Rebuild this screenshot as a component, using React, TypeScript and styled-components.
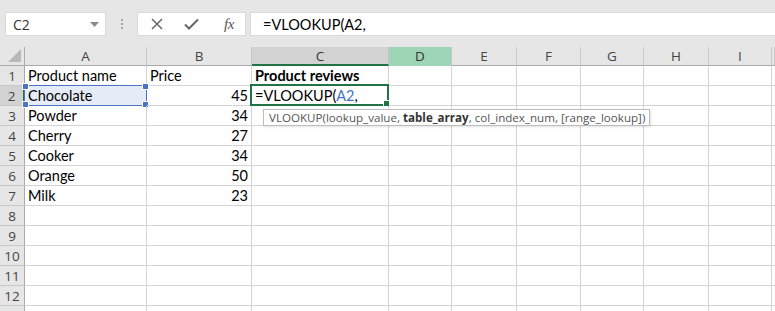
import React from "react";
import styled, { createGlobalStyle, css } from "styled-components";

const Global = createGlobalStyle`
  html, body { margin: 0; padding: 0; background: #e6e6e6; overflow: hidden; }
  #root { width: 775px; height: 311px; overflow: hidden; position: relative; }
`;

const UI = `"Open Sans", "Noto Sans", "DejaVu Sans", sans-serif`;
const CELL = `Lato, "Liberation Sans", sans-serif`;

const Page = styled.div`
  width: 775px;
  height: 311px;
  display: flex;
  flex-direction: column;
  background: #e6e6e6;
  position: relative;
  overflow: hidden;
`;

const Toolbar = styled.div`
  flex: 0 0 47px;
  box-sizing: border-box;
  padding: 12px 0 11px 5px;
  display: flex;
  align-items: stretch;
`;

const NameBox = styled.div`
  width: 101px;
  box-sizing: border-box;
  background: #fff;
  border: 1px solid #d9d9d9;
  display: flex;
  align-items: center;
  justify-content: space-between;
  padding: 0 6px 0 7px;
  font-family: ${UI};
  font-size: 14px;
  color: #333;
`;

const Grip = styled.div`
  width: 31px;
  display: flex;
  flex-direction: column;
  align-items: center;
  justify-content: center;
  gap: 2px;
  span {
    width: 2px;
    height: 2px;
    background: #a6a6a6;
  }
`;

const FxButtons = styled.div`
  width: 109px;
  box-sizing: border-box;
  background: #fff;
  border: 1px solid #d9d9d9;
  display: flex;
  align-items: center;
  padding-left: 12px;
`;

const IconSlot = styled.div<{ $w: number }>`
  width: ${(p) => p.$w}px;
  display: flex;
  align-items: center;
  justify-content: center;
`;

const Fx = styled.span`
  font-family: "Liberation Serif", serif;
  font-style: italic;
  font-size: 15px;
  color: #555;
  letter-spacing: -0.5px;
`;

const FormulaInput = styled.div`
  flex: 1;
  margin-left: 4px;
  box-sizing: border-box;
  background: #fff;
  border: 1px solid #d9d9d9;
  border-right: none;
  display: flex;
  align-items: center;
  padding-left: 12px;
  font-family: ${CELL};
  font-size: 14.5px;
  color: #000;
`;

const cols = [25, 122, 105, 137, 63, 65, 64, 63, 65, 63, 3];

const Grid = styled.div`
  flex: 0 0 auto;
  display: grid;
  grid-template-columns: ${cols.map((c) => c + "px").join(" ")};
  grid-template-rows: 19px repeat(13, 20px);
  background: #fff;
  position: relative;
`;

const ColHead = styled.div<{ $state?: "sel" | "hot" }>`
  box-sizing: border-box;
  background: #e6e6e6;
  border-right: 1px solid #c8c8c8;
  border-bottom: 1px solid #ababab;
  display: flex;
  align-items: center;
  justify-content: center;
  font-family: ${UI};
  font-size: 13.5px;
  color: #444;
  ${(p) =>
    p.$state === "sel" &&
    css`
      background: #d2d2d2;
      border-bottom: 2px solid #217346;
      color: #333;
    `}
  ${(p) =>
    p.$state === "hot" &&
    css`
      background: #9fd5b7;
      border-bottom: 1px solid #9fd5b7;
      color: #333;
    `}
`;

const Corner = styled.div`
  box-sizing: border-box;
  background: #e6e6e6;
  border-right: 1px solid #ababab;
  border-bottom: 1px solid #ababab;
  position: relative;
  &::after {
    content: "";
    position: absolute;
    right: 3px;
    bottom: 3px;
    width: 0;
    height: 0;
    border-left: 13px solid transparent;
    border-bottom: 13px solid #b8b8b8;
  }
`;

const RowHead = styled.div<{ $sel?: boolean }>`
  box-sizing: border-box;
  background: ${(p) => (p.$sel ? "#d2d2d2" : "#e6e6e6")};
  border-right: ${(p) => (p.$sel ? "2px solid #217346" : "1px solid #ababab")};
  border-bottom: 1px solid #c8c8c8;
  display: flex;
  align-items: center;
  justify-content: center;
  font-family: ${UI};
  font-size: 13.5px;
  color: #444;
`;

const Cell = styled.div<{ $num?: boolean; $bold?: boolean; $ref?: boolean }>`
  box-sizing: border-box;
  border-right: 1px solid #d4d4d4;
  border-bottom: 1px solid #d4d4d4;
  display: flex;
  align-items: center;
  justify-content: ${(p) => (p.$num ? "flex-end" : "flex-start")};
  padding: 0 3px 0 3px;
  font-family: ${CELL};
  font-size: 14.5px;
  font-weight: ${(p) => (p.$bold ? 700 : 400)};
  color: #000;
  white-space: nowrap;
  overflow: visible;
  position: relative;
  ${(p) =>
    p.$ref &&
    css`
      background: #e6ecf7;
    `}
`;

const RefBox = styled.div`
  position: absolute;
  left: -1px;
  top: -1px;
  right: -1px;
  bottom: -1px;
  border: 1.5px solid #4a74c4;
  pointer-events: none;
`;

const Handle = styled.div<{ $x: "l" | "r"; $y: "t" | "b"; $c: string }>`
  position: absolute;
  width: 5px;
  height: 5px;
  background: ${(p) => p.$c};
  border: 1px solid #fff;
  ${(p) => (p.$x === "l" ? "left: -3px;" : "right: -3px;")}
  ${(p) => (p.$y === "t" ? "top: -3px;" : "bottom: -3px;")}
`;

const ActiveBox = styled.div`
  position: absolute;
  left: -2px;
  top: -2px;
  right: -1px;
  bottom: -1px;
  border: 2px solid #217346;
  pointer-events: none;
`;

const RefText = styled.span`
  color: #4472c4;
`;

const Tip = styled.div`
  position: absolute;
  left: 263px;
  top: 109px;
  height: 17px;
  box-sizing: border-box;
  padding: 0 4px 0 5px;
  background: #fff;
  border: 1px solid #bdbdbd;
  box-shadow: 1px 1px 2px rgba(0, 0, 0, 0.12);
  display: flex;
  align-items: center;
  font-family: ${UI};
  font-size: 11.6px;
  color: #555;
  white-space: nowrap;
  b {
    font-weight: 700;
    color: #333;
  }
`;

const letters = ["A", "B", "C", "D", "E", "F", "G", "H", "I"];
const data: [string, string][] = [
  ["Product name", "Price"],
  ["Chocolate", "45"],
  ["Powder", "34"],
  ["Cherry", "27"],
  ["Cooker", "34"],
  ["Orange", "50"],
  ["Milk", "23"],
];

export default function App() {
  const rows: React.ReactNode[] = [];
  for (let r = 1; r <= 13; r++) {
    const d = data[r - 1];
    rows.push(
      <RowHead key={`h${r}`} $sel={r === 2}>
        {r <= 12 ? r : ""}
      </RowHead>
    );
    for (let c = 0; c < 10; c++) {
      let content: React.ReactNode = null;
      let num = false;
      let bold = false;
      let ref = false;
      let active = false;
      if (d && c === 0) content = d[0];
      if (d && c === 1) {
        content = d[1];
        num = r > 1;
      }
      if (r === 1 && c === 2) {
        content = "Product reviews";
        bold = true;
      }
      if (r === 2 && c === 0) ref = true;
      if (r === 2 && c === 2) {
        active = true;
        content = (
          <span>
            =VLOOKUP(<RefText>A2</RefText>,
          </span>
        );
      }
      rows.push(
        <Cell key={`${r}-${c}`} $num={num} $bold={bold} $ref={ref}>
          {content}
          {ref && (
            <RefBox>
              <Handle $x="l" $y="t" $c="#4a74c4" />
              <Handle $x="r" $y="t" $c="#4a74c4" />
              <Handle $x="l" $y="b" $c="#4a74c4" />
              <Handle $x="r" $y="b" $c="#4a74c4" />
            </RefBox>
          )}
          {active && (
            <ActiveBox>
              <Handle $x="r" $y="b" $c="#217346" />
            </ActiveBox>
          )}
        </Cell>
      );
    }
  }

  return (
    <>
      <Global />
      <Page>
        <Toolbar>
          <NameBox>
            <span>C2</span>
            <svg width="9" height="5" viewBox="0 0 9 5">
              <path d="M0 0h9L4.5 5z" fill="#8a8a8a" />
            </svg>
          </NameBox>
          <Grip>
            <span />
            <span />
            <span />
          </Grip>
          <FxButtons>
            <IconSlot $w={14}>
              <svg width="12" height="12" viewBox="0 0 12 12">
                <path d="M1 1l10 10M11 1L1 11" stroke="#666" strokeWidth="1.5" fill="none" />
              </svg>
            </IconSlot>
            <IconSlot $w={54}>
              <svg width="15" height="12" viewBox="0 0 15 12">
                <path d="M1 6.5l4 4L14 1.5" stroke="#666" strokeWidth="2" fill="none" />
              </svg>
            </IconSlot>
            <IconSlot $w={22}>
              <Fx>fx</Fx>
            </IconSlot>
          </FxButtons>
          <FormulaInput>=VLOOKUP(A2,</FormulaInput>
        </Toolbar>
        <Grid>
          <Corner />
          {letters.map((l) => (
            <ColHead key={l} $state={l === "C" ? "sel" : l === "D" ? "hot" : undefined}>
              {l}
            </ColHead>
          ))}
          <ColHead />
          {rows}
        </Grid>
        <Tip>
          VLOOKUP(lookup_value,&nbsp;<b>table_array</b>, col_index_num, [range_lookup])
        </Tip>
      </Page>
    </>
  );
}
